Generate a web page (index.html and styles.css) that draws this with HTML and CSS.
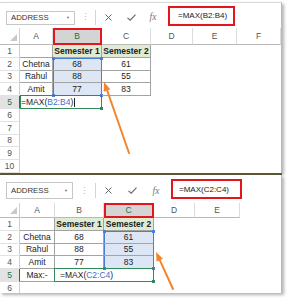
FILE: index.html
```html
<!DOCTYPE html>
<html lang="en">
<head>
  <meta charset="UTF-8">
  <title>MAX function</title>
  <link rel="stylesheet" href="styles.css">
</head>
<body>

  <div class="shot shot-top">
    <div class="toolbar">
      <div class="namebox">ADDRESS<span class="drop">▼</span></div>
      <span class="grip">⋮</span>
      <div class="fbtns">
        <span><svg width="7" height="7" viewBox="0 0 7 7"><path d="M0.5 0.5 L6.5 6.5 M6.5 0.5 L0.5 6.5" stroke="#666" stroke-width="1"/></svg></span>
        <span><svg width="9" height="7" viewBox="0 0 9 7"><path d="M0.5 3.8 L3.2 6.2 L8.5 0.6" fill="none" stroke="#666" stroke-width="1.1"/></svg></span>
        <span class="fx-ico">fx</span>
      </div>
      <div class="fbox">=MAX(B2:B4)</div>
    </div>
    <div class="sheet">
      <div class="row head">
        <div class="corner"></div>
        <div class="col">A</div>
        <div class="col on mark">B</div>
        <div class="col">C</div>
        <div class="col">D</div>
        <div class="col">E</div>
        <div class="col">F</div>
      </div>
      <div class="row">
        <div class="rn">1</div>
        <div class="c"></div>
        <div class="c hd">Semester 1</div>
        <div class="c hd">Semester 2</div>
      </div>
      <div class="row">
        <div class="rn">2</div>
        <div class="c">Chetna</div>
        <div class="c sel first">68</div>
        <div class="c">61</div>
      </div>
      <div class="row">
        <div class="rn">3</div>
        <div class="c">Rahul</div>
        <div class="c sel">88</div>
        <div class="c">55</div>
      </div>
      <div class="row">
        <div class="rn">4</div>
        <div class="c">Amit</div>
        <div class="c sel last">77</div>
        <div class="c">83</div>
      </div>
      <div class="row">
        <div class="rn on">5</div>
        <div class="c edit">=MAX(<span class="ref">B2:B4</span>)<span class="caret"></span></div>
      </div>
      <div class="row"><div class="rn">6</div></div>
      <div class="row"><div class="rn">7</div></div>
      <div class="row"><div class="rn">8</div></div>
      <div class="row"><div class="rn">9</div></div>
      <div class="row"><div class="rn">10</div></div>
    </div>
  </div>

  <div class="divider"></div>

  <div class="shot shot-bot">
    <div class="toolbar">
      <div class="namebox">ADDRESS<span class="drop">▼</span></div>
      <span class="grip">⋮</span>
      <div class="fbtns">
        <span><svg width="7" height="7" viewBox="0 0 7 7"><path d="M0.5 0.5 L6.5 6.5 M6.5 0.5 L0.5 6.5" stroke="#666" stroke-width="1"/></svg></span>
        <span><svg width="9" height="7" viewBox="0 0 9 7"><path d="M0.5 3.8 L3.2 6.2 L8.5 0.6" fill="none" stroke="#666" stroke-width="1.1"/></svg></span>
        <span class="fx-ico">fx</span>
      </div>
      <div class="fbox">=MAX(C2:C4)</div>
    </div>
    <div class="sheet">
      <div class="row head">
        <div class="corner"></div>
        <div class="col">A</div>
        <div class="col">B</div>
        <div class="col on mark">C</div>
        <div class="col">D</div>
        <div class="col">E</div>
      </div>
      <div class="row">
        <div class="rn">1</div>
        <div class="c"></div>
        <div class="c hd">Semester 1</div>
        <div class="c hd">Semester 2</div>
      </div>
      <div class="row">
        <div class="rn">2</div>
        <div class="c">Chetna</div>
        <div class="c">68</div>
        <div class="c sel first">61</div>
      </div>
      <div class="row">
        <div class="rn">3</div>
        <div class="c">Rahul</div>
        <div class="c">88</div>
        <div class="c sel">55</div>
      </div>
      <div class="row">
        <div class="rn">4</div>
        <div class="c">Amit</div>
        <div class="c">77</div>
        <div class="c sel last">83</div>
      </div>
      <div class="row">
        <div class="rn on">5</div>
        <div class="c">Max:-</div>
        <div class="c edit">=MAX(<span class="ref">C2:C4</span>)</div>
      </div>
      <div class="row"><div class="rn">6</div></div>
    </div>
  </div>

  <svg class="arrows" width="287" height="300" viewBox="0 0 287 300">
    <line x1="129" y1="153" x2="107" y2="90" stroke="#f3852c" stroke-width="2" stroke-linecap="round"/>
    <polygon points="104,82 110.3,89.3 103.7,91.7" fill="#f3852c"/>
    <line x1="173" y1="289" x2="159.8" y2="260.2" stroke="#f3852c" stroke-width="2" stroke-linecap="round"/>
    <polygon points="156,252 163,258.7 156.6,261.7" fill="#f3852c"/>
  </svg>

</body>
</html>
```

FILE: styles.css
```css
body {
  margin: 0;
  width: 287px;
  height: 300px;
  position: relative;
  overflow: hidden;
  background-color: #fff;
  font-family: "Liberation Sans", Arial, sans-serif;
  font-size: 8.5px;
  color: #222;
}

.shot {
  width: 281px;
  border-right: 1px solid #b9b9b9;
  background-color: #fff;
  box-shadow: 2px 2px 3px rgba(0, 0, 0, 0.3);
  overflow: hidden;
}

.shot-top {
  margin-top: 2px;
  height: 170px;
  border-top: 1px solid #d9d9d9;
  --cols: 20px 33px 49px 49px 42px 44px 44px;
}

.shot-bot {
  height: 118px;
  --cols: 20px 35px 49px 50px 41px 45px;
}

.divider {
  width: 282px;
  height: 2px;
  background-color: #5b5735;
}

/* name box + formula bar */
.toolbar {
  display: flex;
  align-items: center;
  height: 25px;
}

.shot-bot .toolbar {
  height: 28px;
}

.namebox {
  display: flex;
  align-items: center;
  justify-content: space-between;
  box-sizing: border-box;
  width: 69px;
  height: 14px;
  margin: 4px 0 0 6px;
  padding: 0 4px;
  border: 1px solid #c6c6c6;
  font-size: 7.8px;
  color: #333;
}

.shot-bot .namebox {
  width: 67px;
  height: 17px;
  margin-top: 3px;
}

.drop {
  font-size: 4px;
  color: #777;
}

.grip {
  width: 20px;
  margin-top: 3px;
  text-align: center;
  color: #b5b5b5;
  font-size: 9px;
}

.shot-bot .grip {
  width: 22px;
}

.fbtns {
  display: flex;
  align-items: center;
  height: 15px;
  margin-top: 3px;
  border-left: 1px solid #d4d4d4;
}

.fbtns span {
  display: flex;
  justify-content: center;
  width: 24px;
}

.fbtns span:nth-child(2) {
  width: 23px;
}

.fbtns .fx-ico {
  width: 20px;
  font-family: "Liberation Serif", serif;
  font-style: italic;
  font-size: 9.5px;
  color: #777;
}

.shot-bot .fbtns span:nth-child(2),
.shot-bot .fbtns .fx-ico {
  width: 24px;
}

.fbox {
  display: flex;
  align-items: center;
  box-sizing: border-box;
  width: 67px;
  height: 20px;
  margin-left: 5px;
  padding-left: 8px;
  border: 2px solid #e2161d;
  font-size: 8px;
  color: #222;
}

.shot-bot .fbox {
  width: 71px;
  margin-left: 3px;
  padding-left: 6px;
}

/* grid */
.row {
  display: grid;
  grid-template-columns: var(--cols);
  height: 12.8px;
}

.row.head {
  height: 17px;
}

.shot-bot .row.head {
  height: 15px;
}

.row > div {
  box-sizing: border-box;
  display: flex;
  align-items: center;
  justify-content: center;
  position: relative;
  white-space: nowrap;
}

.corner {
  border-right: 1px solid #cfcfcf;
  border-bottom: 1px solid #b9b9b9;
}

.corner::after {
  content: "";
  position: absolute;
  right: 2px;
  bottom: 3px;
  border-left: 7px solid transparent;
  border-bottom: 7px solid #c9c9c9;
}

.col {
  border-right: 1px solid #dcdcdc;
  border-bottom: 1px solid #b9b9b9;
  color: #555;
}

.col.on {
  background-color: #d4d4d4;
  color: #217346;
}

.col.mark {
  outline: 2px solid #e2161d;
  outline-offset: -2px;
}

.rn {
  border-right: 1px solid #cfcfcf;
  border-bottom: 1px solid #e2e2e2;
  color: #555;
}

.rn.on {
  background-color: #e3e3e3;
  color: #217346;
  border-right-color: #217346;
}

.c {
  border-right: 1px solid #a3a3a3;
  border-bottom: 1px solid #a3a3a3;
}

.c.hd {
  background-color: #dfebd2;
  font-weight: bold;
}

/* selected range */
.sel {
  background-color: #dde6f5;
  border-right-color: #4a7ed6;
  box-shadow: inset 1px 0 0 #4a7ed6;
}

.sel.first {
  box-shadow: inset 1px 0 0 #4a7ed6, inset 0 1px 0 #4a7ed6;
}

.sel.last {
  border-bottom-color: #4a7ed6;
}

.sel.first::before,
.sel.first::after,
.sel.last::before,
.sel.last::after {
  content: "";
  position: absolute;
  width: 3px;
  height: 3px;
  background-color: #4a7ed6;
}

.sel.first::before { left: -1px; top: -1px; }
.sel.first::after { right: -2px; top: -1px; }
.sel.last::before { left: -1px; bottom: -2px; }
.sel.last::after { right: -2px; bottom: -2px; }

/* cell being edited */
.c.edit {
  grid-column: span 2;
  justify-content: flex-start;
  margin-top: -1px;
  border: 1px solid #2e8b57;
}

.shot-bot .c.edit {
  margin-left: -1px;
  padding-left: 5px;
}

.c.edit::after {
  content: "";
  position: absolute;
  right: -2px;
  bottom: -2px;
  width: 3px;
  height: 3px;
  background-color: #2e8b57;
}

.ref {
  color: #3c72d0;
}

.caret {
  display: inline-block;
  width: 1px;
  height: 9px;
  margin-left: 1px;
  background-color: #222;
}

.arrows {
  position: absolute;
  left: 0;
  top: 0;
  pointer-events: none;
}
```
